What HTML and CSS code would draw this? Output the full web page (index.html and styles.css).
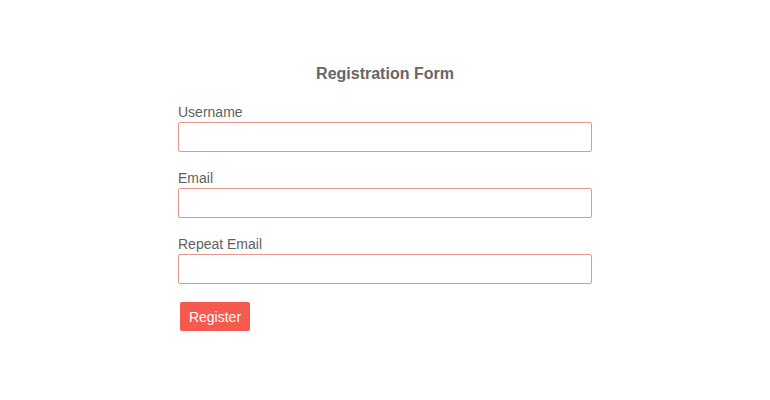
FILE: index.html
```html
<!DOCTYPE html>
<html>
<head>
<meta charset="utf-8">
<link rel="stylesheet" href="styles.css">
</head>
<body>
<form class="form">
  <h1 class="title">Registration Form</h1>
  <label class="label" for="u">Username</label>
  <input class="input" id="u" type="text">
  <label class="label" for="e">Email</label>
  <input class="input" id="e" type="text">
  <label class="label" for="r">Repeat Email</label>
  <input class="input" id="r" type="text">
  <button class="btn" type="button">Register</button>
</form>
</body>
</html>
```
FILE: styles.css
```css
html, body {
  margin: 0;
  padding: 0;
  background: #ffffff;
}
body {
  font-family: "Liberation Sans", Arial, sans-serif;
  color: #666666;
}
.form {
  width: 414px;
  margin: 0 auto;
  padding-top: 65px;
  display: flex;
  flex-direction: column;
  align-items: stretch;
}
.title {
  margin: 0 0 21px 0;
  font-size: 16px;
  line-height: 18px;
  font-weight: bold;
  text-align: center;
  color: #666666;
}
.label {
  font-size: 14px;
  line-height: 17px;
  margin-bottom: 1px;
  color: #5f5f5f;
}
.input {
  box-sizing: border-box;
  height: 30px;
  margin: 0 0 18px 0;
  border: 1px solid #e9958d;
  border-radius: 2px;
  background: #fff;
  outline: none;
  padding: 0 6px;
}
.btn {
  align-self: flex-start;
  margin-left: 2px;
  width: 70px;
  height: 29px;
  border: none;
  border-radius: 2px;
  background: #f6594d;
  color: #ffffff;
  font-family: "Liberation Sans", Arial, sans-serif;
  font-size: 14px;
  padding: 0;
}
```
